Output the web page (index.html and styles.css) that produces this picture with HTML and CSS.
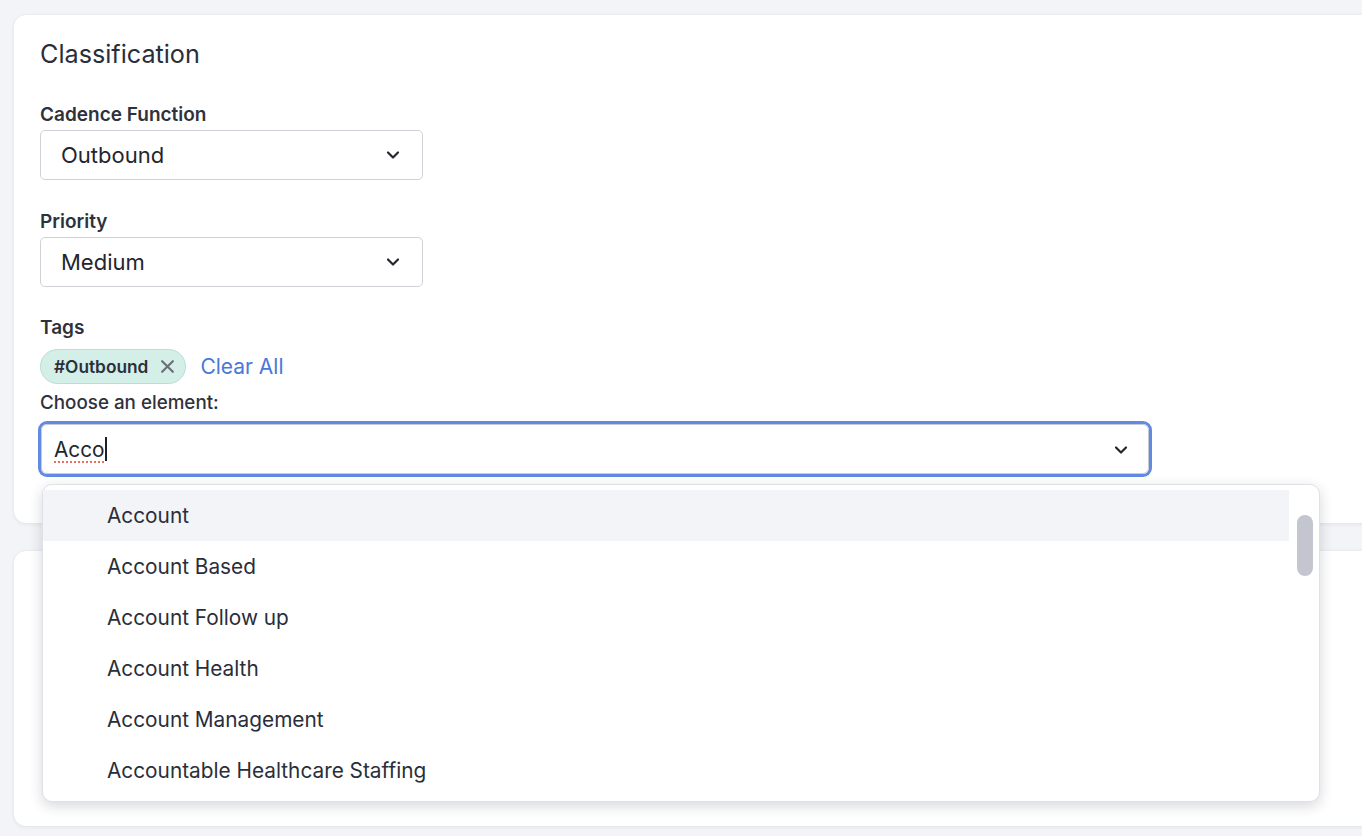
FILE: index.html
```html
<!DOCTYPE html>
<html>
<head>
<meta charset="utf-8">
<link rel="stylesheet" href="styles.css">
</head>
<body>
<div class="page">
  <section class="card card-main">
    <h2 class="card-title">Classification</h2>

    <div class="field">
      <label class="field-label">Cadence Function</label>
      <div class="select">
        <span>Outbound</span>
        <svg class="chev" width="16" height="10" viewBox="0 0 16 10"><path d="M3 2.5l5 5 5-5" fill="none" stroke="#23262e" stroke-width="2.2" stroke-linecap="round" stroke-linejoin="round"/></svg>
      </div>
    </div>

    <div class="field">
      <label class="field-label">Priority</label>
      <div class="select">
        <span>Medium</span>
        <svg class="chev" width="16" height="10" viewBox="0 0 16 10"><path d="M3 2.5l5 5 5-5" fill="none" stroke="#23262e" stroke-width="2.2" stroke-linecap="round" stroke-linejoin="round"/></svg>
      </div>
    </div>

    <div class="field tags-field">
      <label class="field-label">Tags</label>
      <div class="tags-row">
        <span class="chip">#Outbound
          <svg class="chip-x" width="15" height="15" viewBox="0 0 14 14"><path d="M2 2l10 10M12 2L2 12" stroke="#6a6e78" stroke-width="2" stroke-linecap="round"/></svg>
        </span>
        <a class="clear-all">Clear All</a>
      </div>
      <div class="choose-label">Choose an element:</div>
      <div class="combo">
        <div class="combo-input">
          <span class="typed">Acco</span><span class="caret"></span>
          <svg class="chev combo-chev" width="16" height="10" viewBox="0 0 16 10"><path d="M3 2.5l5 5 5-5" fill="none" stroke="#23262e" stroke-width="2.2" stroke-linecap="round" stroke-linejoin="round"/></svg>
        </div>
        <div class="dropdown">
          <ul class="options">
            <li class="option active">Account</li>
            <li class="option">Account Based</li>
            <li class="option">Account Follow up</li>
            <li class="option">Account Health</li>
            <li class="option">Account Management</li>
            <li class="option">Accountable Healthcare Staffing</li>
          </ul>
          <div class="scroll-thumb"></div>
        </div>
      </div>
    </div>
  </section>

  <section class="card card-second"></section>
</div>
</body>
</html>
```

FILE: styles.css
```css
* { box-sizing: border-box; }

html, body {
  margin: 0;
  padding: 0;
  height: 100%;
  overflow: hidden;
}

body {
  background: #f3f4f7;
  font-family: Inter, "Noto Sans", "Liberation Sans", sans-serif;
  color: #2a2e39;
}

.page {
  padding: 15px 0 0 14px;
  width: 1420px;
}

.card {
  background: #ffffff;
  border-radius: 12px;
  box-shadow: 0 1px 4px rgba(30, 35, 60, 0.08), 0 0 1px rgba(30, 35, 60, 0.08);
}

.card-main {
  position: relative;
  height: 508px;
  padding: 24px 0 0 26px;
}

.card-second {
  margin-top: 28px;
  height: 275px;
}

.card-title {
  margin: 0;
  font-size: 25.2px;
  line-height: 31px;
  font-weight: 400;
  color: #2a2e3a;
}

.field {
  display: flex;
  flex-direction: column;
  align-items: flex-start;
}

.card-title + .field { margin-top: 33px; }
.field + .field { margin-top: 30px; }
.tags-field { margin-top: 29px !important; }

.field-label {
  font-size: 19px;
  line-height: 23px;
  font-weight: 600;
  color: #2e323c;
  margin-bottom: 4px;
}

.select {
  width: 383px;
  height: 50px;
  border: 1px solid #cfd1d6;
  border-radius: 5px;
  display: flex;
  align-items: center;
  justify-content: space-between;
  padding: 0 21px 0 20px;
  font-size: 22px;
  color: #23262e;
}

.chev { display: block; }

.tags-row {
  display: flex;
  align-items: center;
  margin-top: 6px;
  gap: 14px;
}

.chip {
  display: inline-flex;
  align-items: center;
  height: 35px;
  padding: 0 10px 0 13px;
  background: #d4efe8;
  border: 1px solid #b6e0d5;
  border-radius: 18px;
  font-size: 17.3px;
  font-weight: 600;
  color: #2b2f3a;
  gap: 12px;
}

.chip-x { display: block; }

.clear-all {
  font-size: 21px;
  color: #4a78d9;
  cursor: pointer;
}

.choose-label {
  margin-top: 8px;
  font-size: 18.8px;
  line-height: 22px;
  font-weight: 500;
  color: #2e323c;
}

.combo {
  margin-top: 10px;
  margin-left: 1px;
}

.combo-input {
  position: relative;
  width: 1108px;
  height: 50px;
  border: 1px solid #c7c9d3;
  border-radius: 6px;
  box-shadow: 0 0 0 3px #628ae3;
  display: flex;
  align-items: center;
  padding: 0 0 0 12px;
  font-size: 20.8px;
  color: #23262e;
}

.typed {
  text-decoration: underline dotted #e8705f;
  text-decoration-thickness: 2px;
  text-underline-offset: 5px;
}

.caret {
  display: inline-block;
  width: 2px;
  height: 24px;
  background: #1d2029;
}

.combo-chev {
  position: absolute;
  right: 19px;
  top: 20px;
}

.dropdown {
  position: absolute;
  left: 28px;
  top: 469px;
  width: 1278px;
  height: 318px;
  background: #ffffff;
  border: 1px solid #dfe1e7;
  border-radius: 10px;
  box-shadow: 0 4px 14px rgba(30, 35, 60, 0.18);
  overflow: hidden;
  z-index: 5;
}

.options {
  list-style: none;
  margin: 5px 30px 0 0;
  padding: 0;
}

.option {
  height: 51px;
  display: flex;
  align-items: center;
  padding-left: 64px;
  font-size: 20.8px;
  color: #2a2e39;
}

.option.active {
  background: #f3f4f7;
}

.scroll-thumb {
  position: absolute;
  right: 6px;
  top: 30px;
  width: 16px;
  height: 61px;
  border-radius: 8px;
  background: #c4c6cf;
}
```
